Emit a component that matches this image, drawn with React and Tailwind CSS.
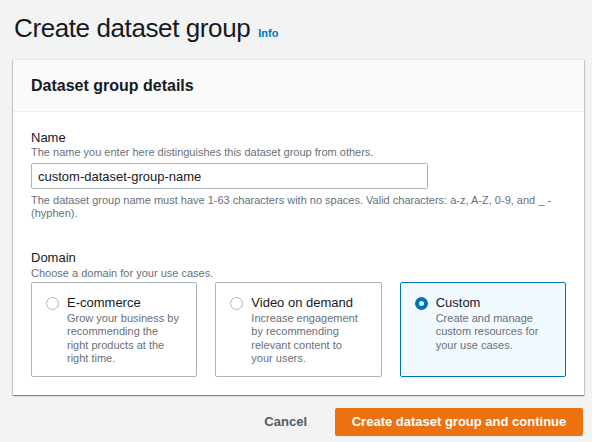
import { useState } from 'react'

const domains = [
  { id: 'ecommerce', title: 'E-commerce', desc: 'Grow your business by recommending the right products at the right time.' },
  { id: 'vod', title: 'Video on demand', desc: 'Increase engagement by recommending relevant content to your users.' },
  { id: 'custom', title: 'Custom', desc: 'Create and manage custom resources for your use cases.' },
]

const Radio = ({ checked }) => (
  <span
    className={
      checked
        ? 'mt-[2px] w-[13px] h-[13px] shrink-0 rounded-full border-[4px] border-[#0073bb] bg-white'
        : 'mt-[2px] w-[13px] h-[13px] shrink-0 rounded-full border border-[#aab7b8] bg-white'
    }
  />
)

const App = () => {
  const [domain, setDomain] = useState('custom')
  const [name, setName] = useState('custom-dataset-group-name')

  return (
    <div className="w-[592px] h-[442px] bg-[#f2f3f3] overflow-hidden font-['Liberation_Sans',Arial,sans-serif] text-[#16191f]">
      <div className="flex items-baseline gap-2 pl-[14px] pt-[12px] h-[59px]">
        <h1 className="text-[26px] leading-[32px] tracking-[-0.4px]">Create dataset group</h1>
        <a className="text-[11px] font-bold text-[#0073bb]">Info</a>
      </div>

      <div className="ml-[13px] w-[571px] bg-white border-t border-[#eaeded] shadow-[0_1px_1px_0_rgba(0,28,36,0.3),1px_1px_1px_0_rgba(0,28,36,0.15),-1px_1px_1px_0_rgba(0,28,36,0.15)]">
        <div className="h-[52px] bg-[#fafafa] border-b border-[#eaeded] flex items-center px-[18px]">
          <h2 className="text-[16px] font-bold">Dataset group details</h2>
        </div>

        <div className="px-[18px] pt-[19px] pb-[18px]">
          <div className="text-[13px] leading-[14px]">Name</div>
          <div className="text-[11px] leading-[14px] text-[#687078]">
            The name you enter here distinguishes this dataset group from others.
          </div>
          <input
            value={name}
            onChange={(e) => setName(e.target.value)}
            className="mt-[4px] w-[397px] h-[26px] border border-[#aab7b8] rounded-[2px] px-[6px] text-[13px] outline-none"
          />
          <div className="mt-[5px] w-[535px] text-[11px] leading-[13px] text-[#687078]">
            The dataset group name must have 1-63 characters with no spaces. Valid characters: a-z, A-Z, 0-9, and _ - (hyphen).
          </div>

          <div className="mt-[30px] text-[13px] leading-[16px]">Domain</div>
          <div className="text-[11px] leading-[14px] text-[#687078]">Choose a domain for your use cases.</div>

          <div className="mt-[2px] grid grid-cols-3 gap-[18px] w-[535px]">
            {domains.map((d) => {
              const checked = domain === d.id
              return (
                <label
                  key={d.id}
                  onClick={() => setDomain(d.id)}
                  className={
                    checked
                      ? 'flex gap-[8px] h-[95px] pl-[14px] pr-[16px] pt-[12px] border border-[#0073bb] bg-[#f1faff] rounded-[2px] cursor-pointer'
                      : 'flex gap-[8px] h-[95px] pl-[14px] pr-[16px] pt-[12px] border border-[#aab7b8] bg-white rounded-[2px] cursor-pointer'
                  }
                >
                  <Radio checked={checked} />
                  <div>
                    <div className="text-[13px] leading-[16px]">{d.title}</div>
                    <div className="text-[11px] leading-[13.4px] text-[#687078] mt-[1px]">{d.desc}</div>
                  </div>
                </label>
              )
            })}
          </div>
        </div>
      </div>

      <div className="flex justify-end items-center gap-[28px] pr-[9px] mt-[13px]">
        <button className="text-[13px] font-bold text-[#545b64]">Cancel</button>
        <button className="h-[28px] w-[248px] bg-[#ec7211] rounded-[2px] text-white text-[13px] font-bold">
          Create dataset group and continue
        </button>
      </div>
    </div>
  )
}

export default App
